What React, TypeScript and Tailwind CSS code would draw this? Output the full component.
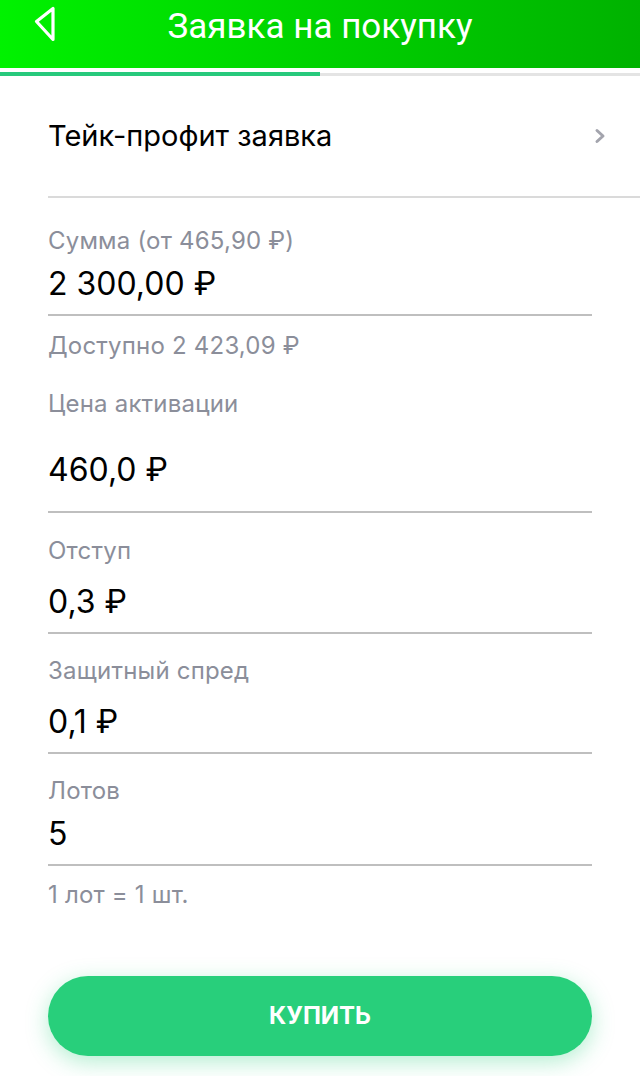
import React from 'react';

type FieldProps = {
    label: string;
    value: string;
    topClass: string;
    gapClass: string;
    bottomClass?: string;
};

const Field = ({ label, value, topClass, gapClass, bottomClass = 'mt-[10px]' }: FieldProps) => (
    <div className={topClass}>
        <div className="h-[28px] leading-[28px] text-[24px] tracking-[0.2px] text-[#8b8e9a]">{label}</div>
        <div className={`${gapClass} h-[40px] leading-[40px] text-[32px] text-black`}>{value}</div>
        <div className={`${bottomClass} h-[2px] bg-[#bfbfbf]`} />
    </div>
);

export default function App() {
    return (
        <div className="w-[640px] h-[1076px] bg-white overflow-hidden" style={{ fontFamily: 'Inter, "Noto Sans", sans-serif' }}>
            <div className="h-[68px] bg-linear-to-r from-[#00f200] to-[#00b200] relative flex items-center justify-center">
                <svg className="absolute left-[32px] top-[5px]" width="26" height="38" viewBox="0 0 26 38" fill="none">
                    <path d="M21 3.5 L21 34.5 L4.5 16.5 Z" stroke="white" strokeWidth="3.2" strokeLinejoin="round" strokeLinecap="round" />
                </svg>
                <div className="text-white text-[35px] leading-none -mt-[16px]" style={{ fontFamily: 'Roboto, sans-serif' }}>
                    Заявка на покупку
                </div>
            </div>

            <div className="mt-[4px] flex h-[4px]">
                <div className="w-[320px] h-[4px] bg-[#27c97c]" />
                <div className="flex-1 self-end h-[3px] bg-[#e4e4e4]" />
            </div>

            <div className="pl-[48px]">
                <div className="h-[122px] flex items-center justify-between pr-[34px] border-b-2 border-[#dadada]">
                    <span className="text-[29px] text-black">Тейк-профит заявка</span>
                    <svg width="12" height="16" viewBox="0 0 12 16" fill="none">
                        <path d="M3 2.5 L9 8 L3 13.5" stroke="#a3a4ad" strokeWidth="3" strokeLinecap="round" strokeLinejoin="round" />
                    </svg>
                </div>
            </div>

            <div className="px-[48px]">
                <Field label="Сумма (от 465,90 ₽)" value="2 300,00 ₽" topClass="pt-[29px]" gapClass="mt-[9px]" />
                <div className="mt-[16px] h-[28px] leading-[28px] text-[24px] tracking-[0.2px] text-[#8b8e9a]">Доступно 2 423,09 ₽</div>

                <Field label="Цена активации" value="460,0 ₽" topClass="pt-[30px]" gapClass="mt-[32px]" bottomClass="mt-[21px]" />
                <Field label="Отступ" value="0,3 ₽" topClass="pt-[24px]" gapClass="mt-[17px]" />
                <Field label="Защитный спред" value="0,1 ₽" topClass="pt-[23px]" gapClass="mt-[17px]" />
                <Field label="Лотов" value="5" topClass="pt-[23px]" gapClass="mt-[9px]" />

                <div className="mt-[15px] h-[28px] leading-[28px] text-[24px] tracking-[0.2px] text-[#8b8e9a]">1 лот = 1 шт.</div>

                <button
                    type="button"
                    className="mt-[67px] w-full h-[80px] rounded-full bg-[#28cf7b] text-white text-[24px] font-bold shadow-[0_6px_22px_rgba(40,207,123,0.35)]"
                >
                    КУПИТЬ
                </button>
            </div>
        </div>
    );
}
